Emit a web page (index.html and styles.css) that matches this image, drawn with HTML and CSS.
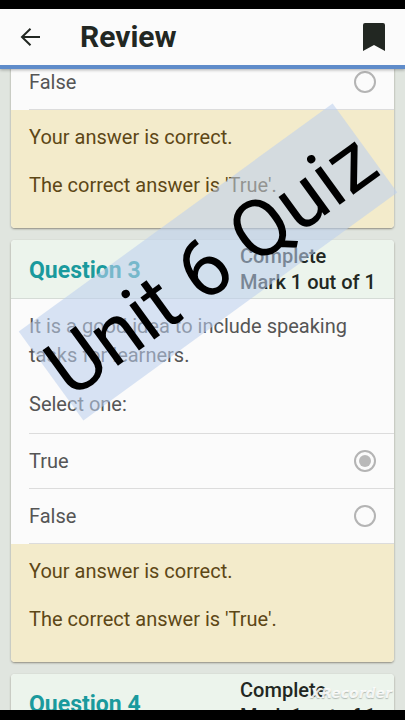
FILE: index.html
```html
<!DOCTYPE html>
<html lang="en">
<head>
<meta charset="utf-8">
<meta name="viewport" content="width=device-width, initial-scale=1">
<title>Review</title>
<link rel="stylesheet" href="styles.css">
</head>
<body>
<header class="toolbar">
  <button class="icon-button" type="button" aria-label="Back">
    <svg width="20" height="18" viewBox="0 0 20 18" fill="none" stroke="currentColor" stroke-width="2"><path d="M20 9H2M10.500 0.800L2 9L10.500 17.200"/></svg>
  </button>
  <h1 class="title">Review</h1>
  <button class="icon-button" type="button" aria-label="Bookmark">
    <svg width="22" height="28" viewBox="0 0 22 28" fill="currentColor"><path d="M2 0H20Q22 0 22 2V28L11 22L0 28V2Q0 0 2 0Z"/></svg>
  </button>
</header>
<main class="content">
  <section class="card card-scrolled">
    <div class="options">
      <label class="option">False<input class="radio" type="radio" name="q2" disabled></label>
    </div>
    <div class="feedback">
      <p>Your answer is correct.</p>
      <p>The correct answer is 'True'.</p>
    </div>
  </section>
  <section class="card">
    <div class="card-header">
      <h2 class="question">Question 3</h2>
      <p class="status">Complete<br>Mark 1 out of 1</p>
    </div>
    <div class="prompt">
      <p>It is a good idea to include speaking tasks for learners.</p>
      <p>Select one:</p>
    </div>
    <div class="options options-ruled">
      <label class="option">True<input class="radio" type="radio" name="q3" checked disabled></label>
      <label class="option">False<input class="radio" type="radio" name="q3" disabled></label>
    </div>
    <div class="feedback">
      <p>Your answer is correct.</p>
      <p>The correct answer is 'True'.</p>
    </div>
  </section>
  <section class="card">
    <div class="card-header">
      <h2 class="question">Question 4</h2>
      <p class="status">Complete<br>Mark 1 out of 1</p>
    </div>
  </section>
</main>
<div class="banner">Unit 6 Quiz</div>
<div class="watermark">XRecorder</div>
</body>
</html>
```
FILE: styles.css
```css
* {
  box-sizing: border-box;
}

body {
  position: relative;
  display: flex;
  flex-direction: column;
  height: 100vh;
  margin: 0;
  border-top: 9px solid #000;
  border-bottom: 10px solid #000;
  overflow: hidden;
  background: #e0e5df;
  color: #555;
  font: 20px/29px Roboto, sans-serif;
}

h1,
h2,
p {
  margin: 0;
}

.toolbar {
  z-index: 1;
  display: flex;
  flex: none;
  align-items: center;
  height: 60px;
  padding: 0 20px;
  border-bottom: 4px solid #5f8cca;
  box-shadow: 0 1px 3px rgba(0, 0, 0, 0.3);
  background: #fbfbfb;
  color: #222722;
}

.icon-button {
  display: flex;
  padding: 0;
  border: 0;
  background: none;
  color: inherit;
}

.title {
  flex: 1;
  margin-left: 40px;
  font-size: 30px;
  line-height: 36px;
  font-weight: 700;
}

.content {
  display: flex;
  flex: 1;
  flex-direction: column;
  gap: 12px;
  min-height: 0;
  padding: 0 11px;
  overflow: hidden;
}

.card {
  flex: none;
  border-radius: 4px;
  box-shadow: 0 1px 2px rgba(60, 50, 30, 0.5);
  background: #fbfbfb;
}

.card-scrolled {
  margin-top: -14px;
}

.card-header {
  display: flex;
  align-items: center;
  justify-content: space-between;
  padding: 3px 18px;
  border-bottom: 1px solid #d5dbd6;
  border-radius: 4px 4px 0 0;
  background: #ecf4ec;
}

.question {
  padding-top: 2px;
  color: #1a9a9d;
  font-size: 23px;
  font-weight: 700;
}

.status {
  color: #222722;
  font-weight: 500;
  line-height: 26px;
}

.prompt {
  display: grid;
  gap: 20px;
  padding: 13px 18px 14px;
}

.options {
  margin-left: 18px;
}

.options-ruled {
  border-top: 1px solid #dcdcdc;
}

.option {
  display: flex;
  align-items: center;
  justify-content: space-between;
  height: 55px;
  padding-right: 18px;
  border-bottom: 1px solid #dcdcdc;
}

.radio {
  display: grid;
  place-items: center;
  width: 22px;
  height: 22px;
  margin: 0;
  border: 2px solid #b4b4b4;
  border-radius: 50%;
  appearance: none;
}

.radio:checked::before {
  width: 12px;
  height: 12px;
  border-radius: 50%;
  background: #b9b9b9;
  content: "";
}

.feedback {
  display: grid;
  gap: 19px;
  padding: 13px 18px 28px;
  border-radius: 0 0 4px 4px;
  background: #f3ebcb;
  color: #5d4716;
}

.banner {
  position: absolute;
  z-index: 2;
  top: 198px;
  left: 50%;
  width: 388px;
  margin-left: -189px;
  padding: 8px 0 0 2px;
  transform: rotate(-36deg);
  background: rgba(189, 207, 238, 0.57);
  color: #000;
  font: 80px/102px Roboto, sans-serif;
  text-align: center;
  white-space: nowrap;
}

.watermark {
  position: absolute;
  z-index: 2;
  right: 13px;
  bottom: 8px;
  color: rgba(255, 255, 255, 0.85);
  font: italic bold 14px/18px "DejaVu Sans", sans-serif;
  text-shadow: 0 1px 1px rgba(120, 130, 125, 0.5);
}
```
